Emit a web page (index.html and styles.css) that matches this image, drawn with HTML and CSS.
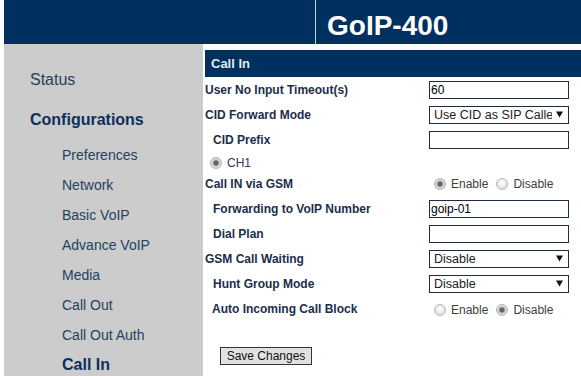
FILE: index.html
```html
<!DOCTYPE html>
<html lang="en">
<head>
<meta charset="utf-8">
<title>GoIP-400 - Call In</title>
<link rel="stylesheet" href="styles.css">
</head>
<body>
<div class="page">
  <header class="top">
    <div class="top-left"></div>
    <div class="top-right"><h1 class="title">GoIP-400</h1></div>
  </header>
  <div class="main">
    <nav class="side">
      <a class="nav-top">Status</a>
      <a class="nav-top nav-bold">Configurations</a>
      <a class="nav-sub">Preferences</a>
      <a class="nav-sub">Network</a>
      <a class="nav-sub">Basic VoIP</a>
      <a class="nav-sub">Advance VoIP</a>
      <a class="nav-sub">Media</a>
      <a class="nav-sub">Call Out</a>
      <a class="nav-sub">Call Out Auth</a>
      <a class="nav-sub nav-current">Call In</a>
    </nav>
    <section class="content">
      <div class="bar">Call In</div>
      <div class="form">
        <div class="row r25">
          <div class="label">User No Input Timeout(s)</div>
          <div class="ctrl"><input class="field" type="text" value="60"></div>
        </div>
        <div class="row r25">
          <div class="label">CID Forward Mode</div>
          <div class="ctrl">
            <select class="sel"><option>Use CID as SIP Caller ID</option></select>
          </div>
        </div>
        <div class="row r25">
          <div class="label indent">CID Prefix</div>
          <div class="ctrl"><input class="field" type="text" value=""></div>
        </div>
        <div class="row r20">
          <div class="label radio-cell">
            <label class="opt"><input class="radio" type="radio" name="ch" checked><span>CH1</span></label>
          </div>
          <div class="ctrl"></div>
        </div>
        <div class="row r24">
          <div class="label">Call IN via GSM</div>
          <div class="ctrl radios">
            <label class="opt"><input class="radio" type="radio" name="gsm" checked><span>Enable</span></label>
            <label class="opt"><input class="radio" type="radio" name="gsm"><span>Disable</span></label>
          </div>
        </div>
        <div class="row r25">
          <div class="label indent">Forwarding to VoIP Number</div>
          <div class="ctrl"><input class="field" type="text" value="goip-01"></div>
        </div>
        <div class="row r25">
          <div class="label indent">Dial Plan</div>
          <div class="ctrl"><input class="field" type="text" value=""></div>
        </div>
        <div class="row r25">
          <div class="label">GSM Call Waiting</div>
          <div class="ctrl"><select class="sel"><option>Disable</option><option>Enable</option></select></div>
        </div>
        <div class="row r25">
          <div class="label indent">Hunt Group Mode</div>
          <div class="ctrl"><select class="sel"><option>Disable</option><option>Enable</option></select></div>
        </div>
        <div class="row r25">
          <div class="label indent-s">Auto Incoming Call Block</div>
          <div class="ctrl radios low">
            <label class="opt"><input class="radio" type="radio" name="blk"><span>Enable</span></label>
            <label class="opt"><input class="radio" type="radio" name="blk" checked><span>Disable</span></label>
          </div>
        </div>
      </div>
      <div class="actions"><button class="btn" type="button">Save Changes</button></div>
    </section>
  </div>
</div>
</body>
</html>
```

FILE: styles.css
```css
html, body {
  margin: 0;
  padding: 0;
  background: #ffffff;
}
body {
  width: 581px;
  height: 376px;
  overflow: hidden;
  font-family: "Liberation Sans", Arial, sans-serif;
}
.page {
  padding-left: 4px;
  height: 376px;
  display: flex;
  flex-direction: column;
}
.top {
  height: 44px;
  display: flex;
  background: #00305f;
  flex: none;
}
.top-left {
  width: 311px;
  flex: none;
}
.top-right {
  flex: 1;
  border-left: 1px solid #c3cedb;
  display: flex;
  align-items: flex-end;
  padding-left: 11px;
}
.title {
  margin: 0 0 2px 0;
  font-size: 28px;
  line-height: 32px;
  font-weight: bold;
  color: #ffffff;
}
.main {
  flex: 1;
  display: grid;
  grid-template-columns: 199px 1fr;
  column-gap: 2px;
}
.side {
  background: #cccccc;
  display: flex;
  flex-direction: column;
  padding-top: 26px;
}
.side a {
  display: block;
  color: #263f5f;
  text-decoration: none;
}
.nav-top {
  padding-left: 26px;
  font-size: 16px;
  line-height: 20px;
  margin-bottom: 20px;
}
.side .nav-bold {
  font-weight: bold;
  color: #0d2f5a;
  margin-bottom: 10px;
}
.nav-sub {
  padding-left: 58px;
  font-size: 14px;
  line-height: 30px;
}
.side .nav-current {
  font-size: 16px;
  font-weight: bold;
  color: #0d2f5a;
}
.content {
  padding-top: 6px;
}
.bar {
  height: 27px;
  line-height: 27px;
  background: #00305f;
  color: #e4e9f0;
  font-size: 13px;
  font-weight: bold;
  padding-left: 6px;
}
.form {
  display: flex;
  flex-direction: column;
}
.row {
  display: grid;
  grid-template-columns: 224px 140px;
  align-items: center;
}
.r25 { height: 25px; }
.r24 { height: 24px; }
.r20 { height: 20px; }
.label {
  font-size: 12px;
  font-weight: bold;
  color: #1b2d4b;
  white-space: nowrap;
}
.indent {
  padding-left: 8px;
}
.indent-s {
  padding-left: 7px;
}
.radio-cell {
  padding-left: 5px;
  padding-top: 4px;
  font-weight: normal;
}
.ctrl {
  display: flex;
  align-items: center;
}
.field {
  box-sizing: border-box;
  width: 140px;
  height: 18px;
  margin: 0;
  padding: 0 1px;
  border: 1px solid #1d2c40;
  font-family: "Liberation Sans", Arial, sans-serif;
  font-size: 12px;
  color: #000000;
  background: #ffffff;
  outline: none;
}
.sel {
  box-sizing: border-box;
  width: 140px;
  height: 18px;
  margin: 0;
  padding: 0 16px 0 4px;
  border: 1px solid #1d2c40;
  border-radius: 0;
  -webkit-appearance: none;
  appearance: none;
  font-family: "Liberation Sans", Arial, sans-serif;
  font-size: 12.5px;
  color: #222222;
  background-color: #ffffff;
  background-image: url("data:image/svg+xml,%3Csvg xmlns='http://www.w3.org/2000/svg' width='7' height='7' viewBox='0 0 7 7'%3E%3Cpath d='M0 0.5H7L3.5 6.5Z' fill='%23111111'/%3E%3C/svg%3E");
  background-repeat: no-repeat;
  background-position: right 5px center;
  outline: none;
}
.radios {
  padding-left: 5px;
  gap: 8px;
}
.low {
  padding-top: 3px;
}
.opt {
  display: inline-flex;
  align-items: center;
  gap: 5px;
  font-size: 12px;
  font-weight: normal;
  color: #3d3d3d;
}
.radio-cell .opt {
  color: #2a3a55;
}
.radio {
  -webkit-appearance: none;
  appearance: none;
  box-sizing: border-box;
  width: 12px;
  height: 12px;
  margin: 0;
  border-radius: 50%;
  border: 1px solid #b4b4b4;
  background: radial-gradient(circle at 50% 35%, #ffffff 0%, #e6e6e6 60%, #d2d2d2 100%);
}
.radio:checked {
  background: radial-gradient(circle at 50% 50%, #616161 0, #6a6a6a 2.2px, #cfcfcf 3.2px, #e9e9e9 100%);
}
.actions {
  padding: 25px 0 0 15px;
}
.btn {
  box-sizing: border-box;
  width: 92px;
  height: 18px;
  margin: 0;
  padding: 0;
  border: 1px solid #333333;
  border-radius: 0;
  background: #e1e1e1;
  font-family: "Liberation Sans", Arial, sans-serif;
  font-size: 12px;
  color: #111111;
}
```
